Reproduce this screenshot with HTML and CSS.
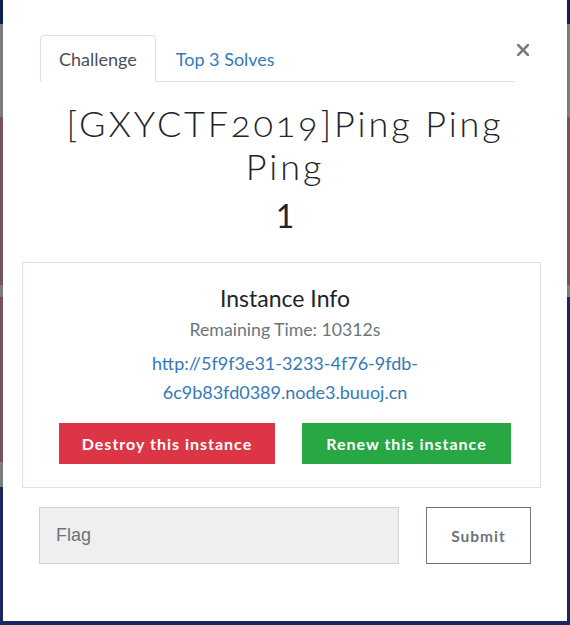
FILE: index.html
```html
<!DOCTYPE html>
<html lang="en">
<head>
<meta charset="utf-8">
<title>[GXYCTF2019]Ping Ping Ping</title>
<link rel="stylesheet" href="styles.css">
</head>
<body>
<div class="backdrop">
  <div class="backdrop-left"></div>
  <div class="backdrop-right"></div>
</div>
<div class="modal">
  <button class="close" aria-label="Close">
    <svg width="12" height="12" viewBox="0 0 12 12"><path d="M1 1 L11 11 M11 1 L1 11" stroke="#7a7a7a" stroke-width="2.6" stroke-linecap="square"/></svg>
  </button>
  <ul class="tabs">
    <li class="tab active">Challenge</li>
    <li class="tab link">Top 3 Solves</li>
  </ul>
  <h3 class="title">[GXYCTF2019]Ping Ping Ping</h3>
  <h4 class="value">1</h4>
  <div class="instance">
    <h4 class="instance-title">Instance Info</h4>
    <p class="remaining">Remaining Time: 10312s</p>
    <p class="url"><a href="#">http://5f9f3e31-3233-4f76-9fdb-6c9b83fd0389.node3.buuoj.cn</a></p>
    <div class="actions">
      <button class="btn btn-danger">Destroy this instance</button>
      <button class="btn btn-success">Renew this instance</button>
    </div>
  </div>
  <form class="flag-form">
    <input class="flag-input" type="text" placeholder="Flag">
    <button class="btn-submit" type="button">Submit</button>
  </form>
</div>
</body>
</html>
```

FILE: styles.css
```css
html, body {
  margin: 0;
  padding: 0;
  height: 100%;
}

body {
  font-family: "Lato", "Liberation Sans", sans-serif;
  overflow: hidden;
}

.backdrop {
  display: grid;
  grid-template-columns: 1fr 1fr;
  height: 625px;
}

.backdrop-left {
  background: linear-gradient(to bottom,
    #0e1f52 0 24px,
    #7c7c7c 24px 117px,
    #7a4f5f 117px 285px,
    #7c7c7c 285px 297px,
    #7a4f5f 297px 462px,
    #7c7c7c 462px 487px,
    #1b2760 487px);
}

.backdrop-right {
  background: linear-gradient(to bottom,
    #0e1f52 0 24px,
    #7c7c7c 24px 117px,
    #7a4f5f 117px 285px,
    #7c7c7c 285px 297px,
    #1b2760 297px);
}

.modal {
  position: absolute;
  left: 3px;
  top: 0;
  width: 564px;
  height: 621px;
  background: #fff;
  box-sizing: border-box;
  padding-top: 35px;
}

.close {
  position: absolute;
  left: 514px;
  top: 44px;
  border: 0;
  background: none;
  padding: 0;
  width: 12px;
  height: 12px;
  display: flex;
}

.tabs {
  list-style: none;
  margin: 0 52px 0 37px;
  padding: 0;
  display: flex;
  border-bottom: 1px solid #dee2e6;
}

.tab {
  font-size: 18px;
  line-height: 24px;
  padding: 11px 18px 10px 18px;
  border: 1px solid transparent;
  border-radius: 4px 4px 0 0;
  margin-bottom: -1px;
}

.tab.active {
  color: #495057;
  border-color: #dee2e6 #dee2e6 #fff;
  background: #fff;
}

.tab.link {
  color: #337ab7;
  padding-left: 19px;
}

.title {
  margin: 20px 0 0;
  font-family: "Lato", sans-serif;
  font-weight: 300;
  font-size: 36px;
  line-height: 43px;
  letter-spacing: 2.9px;
  color: #212529;
  text-align: center;
  padding: 0 30px;
  font-variant-numeric: oldstyle-nums;
}

.value {
  margin: 8px 0 0;
  font-weight: 400;
  font-size: 32px;
  line-height: 40px;
  color: #212529;
  text-align: center;
}

.instance {
  margin: 26px 26px 0 19px;
  border: 1px solid #dee2e6;
  padding: 21px 20px 23px 27px;
  text-align: center;
}

.instance-title {
  margin: 0;
  font-size: 23px;
  font-weight: 400;
  line-height: 28px;
  color: #212529;
}

.remaining {
  margin: 6px 0 0;
  font-size: 17.7px;
  line-height: 24px;
  color: #6c757d;
}

.url {
  margin: 7px 0 0;
  font-size: 18px;
  line-height: 29px;
  padding: 0 90px;
}

.url a {
  color: #337ab7;
  text-decoration: none;
}

.actions {
  display: flex;
  justify-content: center;
  gap: 27px;
  margin-top: 16px;
}

.btn {
  border: 0;
  border-radius: 0;
  height: 41px;
  padding: 0 20px;
  font-family: "Lato", sans-serif;
  font-size: 16px;
  font-weight: 700;
  letter-spacing: 1px;
  color: #fff;
}

.btn-danger {
  background: #dc3545;
  width: 216px;
}

.btn-success {
  background: #28a745;
  width: 209px;
}

.flag-form {
  display: flex;
  margin: 19px 0 0 36px;
  gap: 27px;
}

.flag-input {
  width: 360px;
  height: 57px;
  box-sizing: border-box;
  background: #efefef;
  border: 1px solid #ced4da;
  border-radius: 0;
  padding: 0 16px;
  font-family: "Liberation Sans", Arial, sans-serif;
  font-size: 18px;
  color: #495057;
}

.flag-input::placeholder {
  color: #6c757d;
}

.btn-submit {
  width: 105px;
  height: 57px;
  box-sizing: border-box;
  background: #fff;
  border: 1px solid #6c757d;
  border-radius: 0;
  font-family: "Lato", sans-serif;
  font-size: 15.5px;
  font-weight: 700;
  letter-spacing: 1px;
  color: #6c757d;
}
```
